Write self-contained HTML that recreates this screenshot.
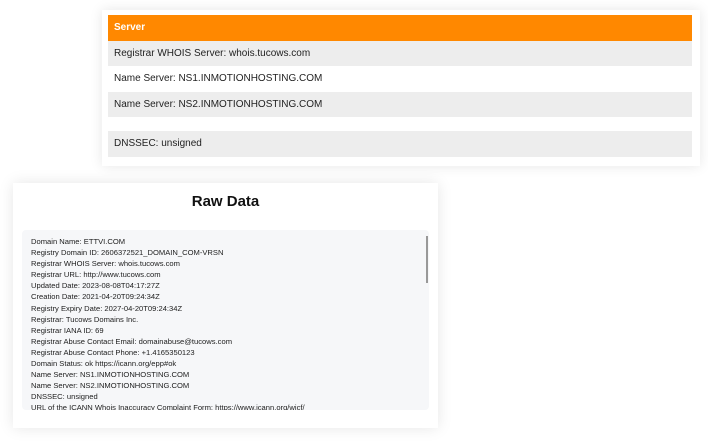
<!DOCTYPE html>
<html><head><style>
body{margin:0;width:708px;height:443px;background:#fff;font-family:"Liberation Sans",sans-serif;position:relative;overflow:hidden}
.card1{position:absolute;left:102px;top:10px;width:598px;height:156px;background:#fff;box-shadow:0 0 12px rgba(0,0,0,.1)}
.row{position:absolute;left:6px;width:584px;font-size:10px;color:#222;box-sizing:border-box;padding-left:6px}
.card2{position:absolute;left:13px;top:183px;width:425px;height:245px;background:#fff;box-shadow:0 0 14px rgba(0,0,0,.1)}
h2{position:absolute;top:10px;left:0;width:100%;text-align:center;margin:0;font-size:15px;font-weight:bold;color:#111}
.pre{position:absolute;left:9px;top:47px;width:407px;height:180px;background:#f6f7f9;border-radius:4px;overflow:hidden}
.pre div{position:absolute;left:9px;top:6px;font-size:7.6px;line-height:11.1px;color:#222;white-space:pre}
.sb{position:absolute;left:404px;top:6px;width:2px;height:47px;background:#999}
</style></head><body>
<div class="card1">
<div class="row" style="top:5px;height:26px;line-height:26px;background:#ff8800;color:#fff;font-weight:bold">Server</div>
<div class="row" style="top:31px;height:25px;line-height:25px;background:#ededed">Registrar WHOIS Server: whois.tucows.com</div>
<div class="row" style="top:56px;height:26px;line-height:26px;background:#fff">Name Server: NS1.INMOTIONHOSTING.COM</div>
<div class="row" style="top:82px;height:25px;line-height:25px;background:#ededed">Name Server: NS2.INMOTIONHOSTING.COM</div>
<div class="row" style="top:121px;height:26px;line-height:26px;background:#ededed">DNSSEC: unsigned</div>
</div>
<div class="card2">
<h2>Raw Data</h2>
<div class="pre"><div>Domain Name: ETTVI.COM
Registry Domain ID: 2606372521_DOMAIN_COM-VRSN
Registrar WHOIS Server: whois.tucows.com
Registrar URL: http://www.tucows.com
Updated Date: 2023-08-08T04:17:27Z
Creation Date: 2021-04-20T09:24:34Z
Registry Expiry Date: 2027-04-20T09:24:34Z
Registrar: Tucows Domains Inc.
Registrar IANA ID: 69
Registrar Abuse Contact Email: domainabuse@tucows.com
Registrar Abuse Contact Phone: +1.4165350123
Domain Status: ok https://icann.org/epp#ok
Name Server: NS1.INMOTIONHOSTING.COM
Name Server: NS2.INMOTIONHOSTING.COM
DNSSEC: unsigned
URL of the ICANN Whois Inaccuracy Complaint Form: https://www.icann.org/wicf/</div><span class="sb"></span></div>
</div>
</body></html>
